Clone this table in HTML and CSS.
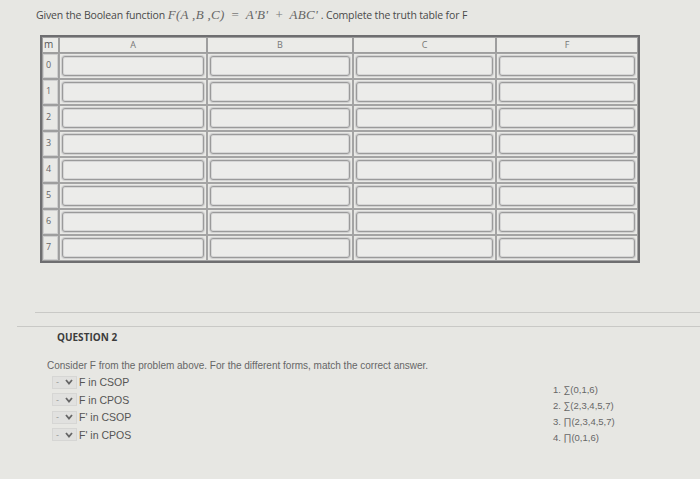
FILE: index.html
```html
<!DOCTYPE html>
<html>
<head>
<meta charset="utf-8">
<link rel="stylesheet" href="styles.css">
</head>
<body>
<div class="page">
  <p class="title">Given the Boolean function <span class="formula">F</span><span class="formula">(A ,B ,C)</span><span class="eq">=</span><span class="formula">A</span><span class="formula">'B'</span><span class="eq">+</span><span class="formula">ABC'</span> . Complete the truth table for F</p>

  <div class="truth">
    <div class="hcell m">m</div>
    <div class="hcell">A</div>
    <div class="hcell">B</div>
    <div class="hcell">C</div>
    <div class="hcell">F</div>

    <div class="mcell">0</div><div class="cell"><div class="box"></div></div><div class="cell"><div class="box"></div></div><div class="cell"><div class="box"></div></div><div class="cell"><div class="box"></div></div>
    <div class="mcell">1</div><div class="cell"><div class="box"></div></div><div class="cell"><div class="box"></div></div><div class="cell"><div class="box"></div></div><div class="cell"><div class="box"></div></div>
    <div class="mcell">2</div><div class="cell"><div class="box"></div></div><div class="cell"><div class="box"></div></div><div class="cell"><div class="box"></div></div><div class="cell"><div class="box"></div></div>
    <div class="mcell">3</div><div class="cell"><div class="box"></div></div><div class="cell"><div class="box"></div></div><div class="cell"><div class="box"></div></div><div class="cell"><div class="box"></div></div>
    <div class="mcell">4</div><div class="cell"><div class="box"></div></div><div class="cell"><div class="box"></div></div><div class="cell"><div class="box"></div></div><div class="cell"><div class="box"></div></div>
    <div class="mcell">5</div><div class="cell"><div class="box"></div></div><div class="cell"><div class="box"></div></div><div class="cell"><div class="box"></div></div><div class="cell"><div class="box"></div></div>
    <div class="mcell">6</div><div class="cell"><div class="box"></div></div><div class="cell"><div class="box"></div></div><div class="cell"><div class="box"></div></div><div class="cell"><div class="box"></div></div>
    <div class="mcell">7</div><div class="cell"><div class="box"></div></div><div class="cell"><div class="box"></div></div><div class="cell"><div class="box"></div></div><div class="cell"><div class="box"></div></div>
  </div>

  <div class="rule rule1"></div>
  <div class="rule rule2"></div>

  <h2 class="qhead">QUESTION 2</h2>
  <p class="prompt">Consider F from the problem above. For the different forms, match the correct answer.</p>

  <div class="match">
    <div class="items">
      <div class="item"><span class="sel"><span class="dash">-</span><svg class="chev" viewBox="0 0 8 6" width="8" height="6"><polyline points="1,1 4,4.5 7,1" fill="none" stroke="#666" stroke-width="1.8"/></svg></span><span class="lbl">F in CSOP</span></div>
      <div class="item"><span class="sel"><span class="dash">-</span><svg class="chev" viewBox="0 0 8 6" width="8" height="6"><polyline points="1,1 4,4.5 7,1" fill="none" stroke="#666" stroke-width="1.8"/></svg></span><span class="lbl">F in CPOS</span></div>
      <div class="item"><span class="sel"><span class="dash">-</span><svg class="chev" viewBox="0 0 8 6" width="8" height="6"><polyline points="1,1 4,4.5 7,1" fill="none" stroke="#666" stroke-width="1.8"/></svg></span><span class="lbl">F' in CSOP</span></div>
      <div class="item"><span class="sel"><span class="dash">-</span><svg class="chev" viewBox="0 0 8 6" width="8" height="6"><polyline points="1,1 4,4.5 7,1" fill="none" stroke="#666" stroke-width="1.8"/></svg></span><span class="lbl">F' in CPOS</span></div>
    </div>
    <ol class="answers">
      <li>1. ∑(0,1,6)</li>
      <li>2. ∑(2,3,4,5,7)</li>
      <li>3. ∏(2,3,4,5,7)</li>
      <li>4. ∏(0,1,6)</li>
    </ol>
  </div>
</div>
</body>
</html>
```

FILE: styles.css
```css
html, body {
  margin: 0;
  padding: 0;
  background: #e7e7e3;
}
body {
  width: 700px;
  height: 479px;
  overflow: hidden;
  font-family: "Open Sans", "Liberation Sans", sans-serif;
  color: #4a4a4a;
}
.page {
  padding-top: 6px;
}
.title {
  margin: 0 0 0 36px;
  font-size: 10.5px;
  line-height: 17px;
  color: #4a4a4a;
  letter-spacing: -0.15px;
  white-space: nowrap;
}
.formula {
  font-family: "Liberation Serif", serif;
  font-style: italic;
  font-size: 13px;
  color: #666;
  letter-spacing: 0.3px;
}
.eq {
  font-family: "Liberation Serif", serif;
  font-size: 13px;
  color: #777;
  margin: 0 7px;
}
.truth {
  margin: 11px 0 0 40px;
  width: 600px;
  display: grid;
  grid-template-columns: 17px 148px 146px 143px 142px;
  grid-template-rows: 16px repeat(8, 26px);
  border: 2px solid #6e6e70;
  background: #e9e9e6;
  box-sizing: border-box;
}
.hcell {
  border: 1px solid #9e9e9e;
  font-size: 9px;
  color: #777;
  text-align: center;
  line-height: 13px;
  background: #ebebe8;
}
.hcell.m {
  font-size: 10px;
  text-align: left;
  padding-left: 1px;
  color: #555;
}
.mcell {
  border: 1px solid #9e9e9e;
  font-size: 9px;
  color: #666;
  padding: 4px 0 0 3px;
  box-shadow: inset 0 0 0 1px #cfcfcf;
}
.cell {
  border: 1px solid #a4a4a4;
  padding: 2px 2px;
  display: flex;
}
.box {
  flex: 1;
  border: 1px solid #9a9a9a;
  border-radius: 3px;
  box-shadow: inset 0 0 0 1px #d6d6d6, 0 0 0 1px #d2d2d2;
  background: #ececea;
}
.rule {
  height: 1px;
  background: #c9c9c6;
}
.rule1 {
  margin: 49px 0 0 35px;
}
.rule2 {
  margin: 13px 0 0 17px;
}
.qhead {
  margin: 3px 0 0 57px;
  font-size: 10px;
  font-weight: 700;
  line-height: 14px;
  color: #3c3c3c;
}
.prompt {
  margin: 16px 0 0 47px;
  font-family: "Liberation Sans", Arial, sans-serif;
  font-size: 10px;
  line-height: 12px;
  color: #666;
}
.match {
  display: flex;
  justify-content: space-between;
  margin-top: 3px;
}
.items {
  margin-left: 52px;
  display: flex;
  flex-direction: column;
  gap: 3px;
}
.item {
  display: flex;
  align-items: center;
  height: 14.5px;
}
.sel {
  width: 25px;
  height: 13px;
  background: #e1e1df;
  border: 1px solid #d6d6d4;
  display: flex;
  align-items: center;
  justify-content: space-between;
  padding: 0 3px 0 3px;
  box-sizing: border-box;
}
.dash {
  font-family: "Liberation Sans", sans-serif;
  font-size: 9px;
  color: #999;
}
.chev {
  display: block;
}
.lbl {
  margin-left: 2px;
  font-family: "Liberation Sans", Arial, sans-serif;
  font-size: 10.5px;
  color: #555;
}
.answers {
  list-style: none;
  margin: 7px 77px 0 0;
  padding: 0;
  width: 70px;
  white-space: nowrap;
  font-family: "Liberation Sans", Arial, sans-serif;
  font-size: 9.5px;
  line-height: 16px;
  color: #666;
}
```
